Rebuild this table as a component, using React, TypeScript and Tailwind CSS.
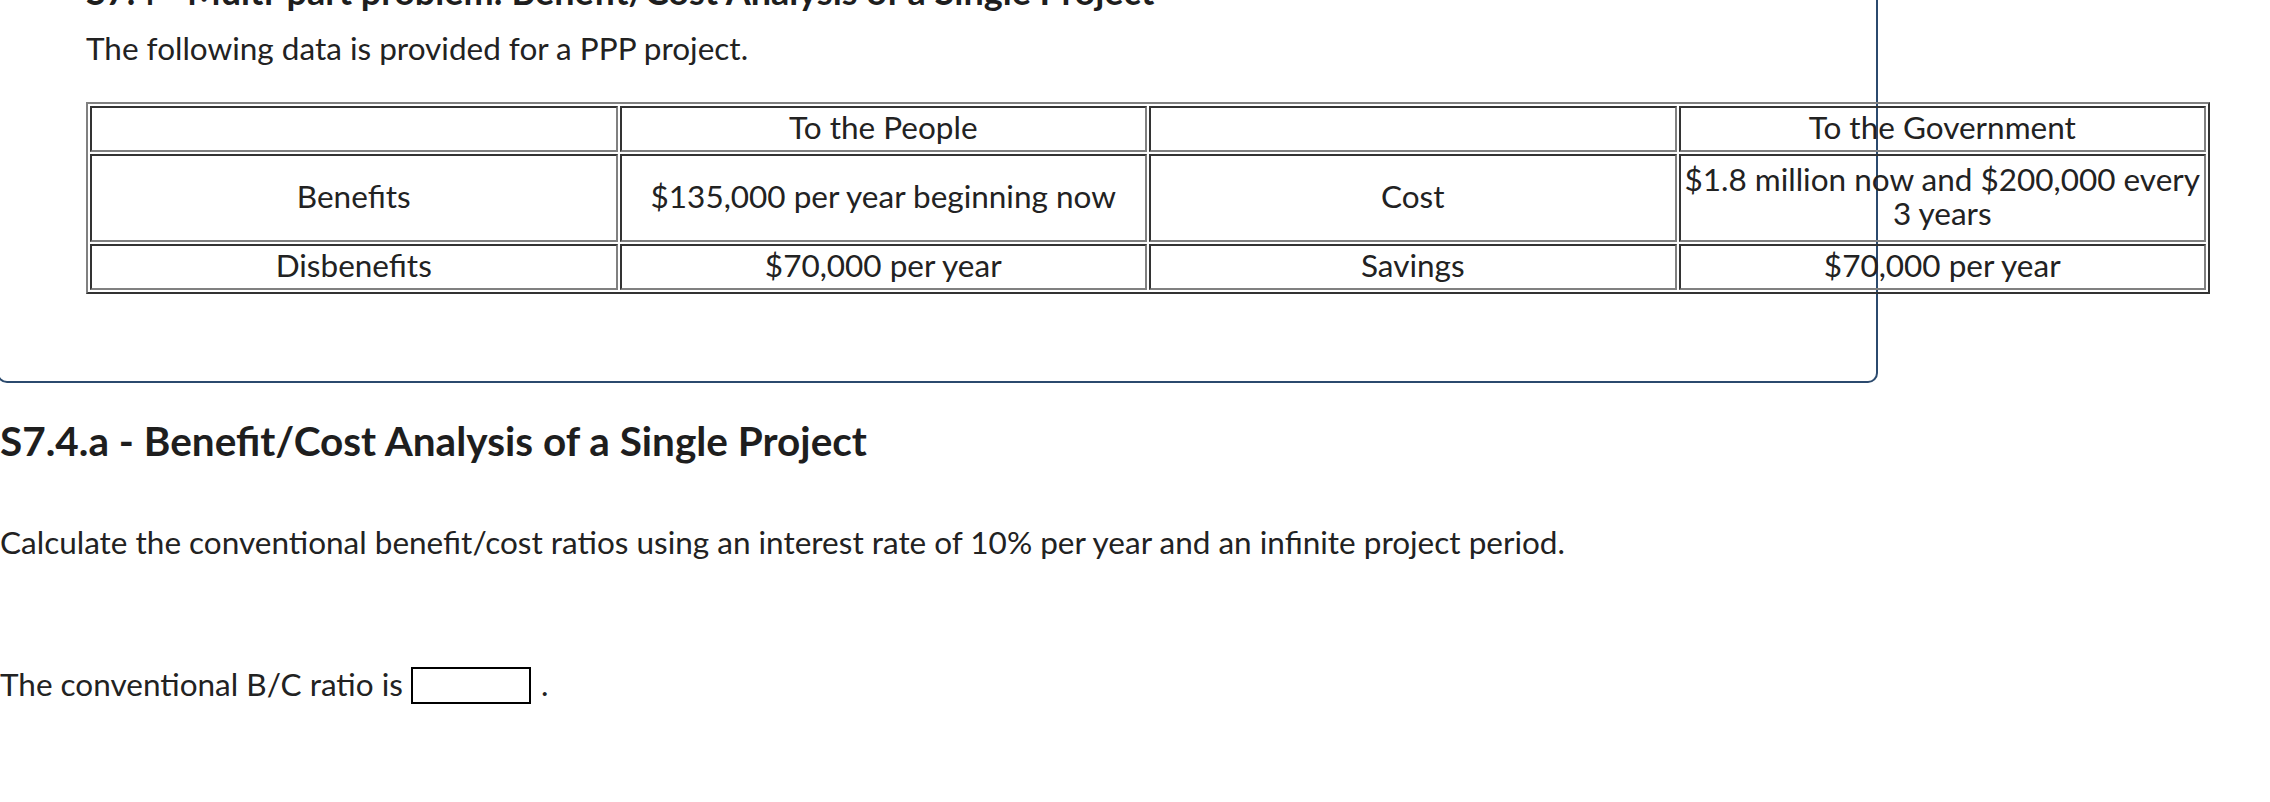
import React from 'react'

const cellClass =
  'border-2 border-t-[#333] border-l-[#333] border-b-[#808080] border-r-[#808080] p-0 text-center align-middle'

const Rows = [
  { h: 'h-[46px]', cells: ['', 'To the People', '', 'To the Government'] },
  {
    h: 'h-[88px]',
    cells: [
      'Benefits',
      '$135,000 per year beginning now',
      'Cost',
      '$1.8 million now and $200,000 every\n3 years',
    ],
  },
  {
    h: 'h-[46px]',
    cells: ['Disbenefits', '$70,000 per year', 'Savings', '$70,000 per year'],
  },
]

const App = () => {
  return (
    <div className="min-h-[802px] w-[2270px] overflow-hidden bg-white font-['Lato','Liberation_Sans',sans-serif] text-[#222]">
      <div
        id="ProblemPanel"
        className="-ml-[3px] w-[1881px] rounded-b-[10px] border-2 border-t-0 border-[#2b4a6e] pb-[87px]"
      >
        <div className="pl-[87px]">
          <h2 className="-mt-[31px] text-[36px] font-bold leading-[44px] text-[#1e1e1e]">
            S7.4 - Multi-part problem: Benefit/Cost Analysis of a Single Project
          </h2>
          <p className="mt-[17px] text-[31.5px] leading-[36px]">
            The following data is provided for a PPP project.
          </p>
          <table className="mt-[36px] w-[2124px] table-fixed border-separate border-spacing-[2px] border-2 border-t-[#808080] border-l-[#808080] border-b-[#333] border-r-[#333] text-[31.5px] leading-[34px]">
            <tbody>
              {Rows.map((r, i) => {
                return (
                  <tr key={i} className={r.h}>
                    {r.cells.map((c, j) => {
                      return (
                        <td key={j} className={cellClass}>
                          <div className="-mt-[4px]">
                            {c.split('\n').map((line, k) => {
                              return (
                                <React.Fragment key={k}>
                                  {k > 0 && <br />}
                                  {line}
                                </React.Fragment>
                              )
                            })}
                          </div>
                        </td>
                      )
                    })}
                  </tr>
                )
              })}
            </tbody>
          </table>
        </div>
      </div>
      <h3 className="mt-[36px] text-[40.5px] font-bold leading-[44px] text-[#1e1e1e]">
        S7.4.a - Benefit/Cost Analysis of a Single Project
      </h3>
      <p className="mt-[61px] text-[31.5px] leading-[36px]">
        Calculate the conventional benefit/cost ratios using an interest rate of
        10% per year and an infinite project period.
      </p>
      <div className="mt-[105px] flex h-[40px] items-center text-[31.5px]">
        <span>The conventional B/C ratio is</span>
        <span className="ml-[8px] inline-block h-[37px] w-[120px] border-2 border-black" />
        <span className="ml-[10px]">.</span>
      </div>
    </div>
  )
}

export default App
